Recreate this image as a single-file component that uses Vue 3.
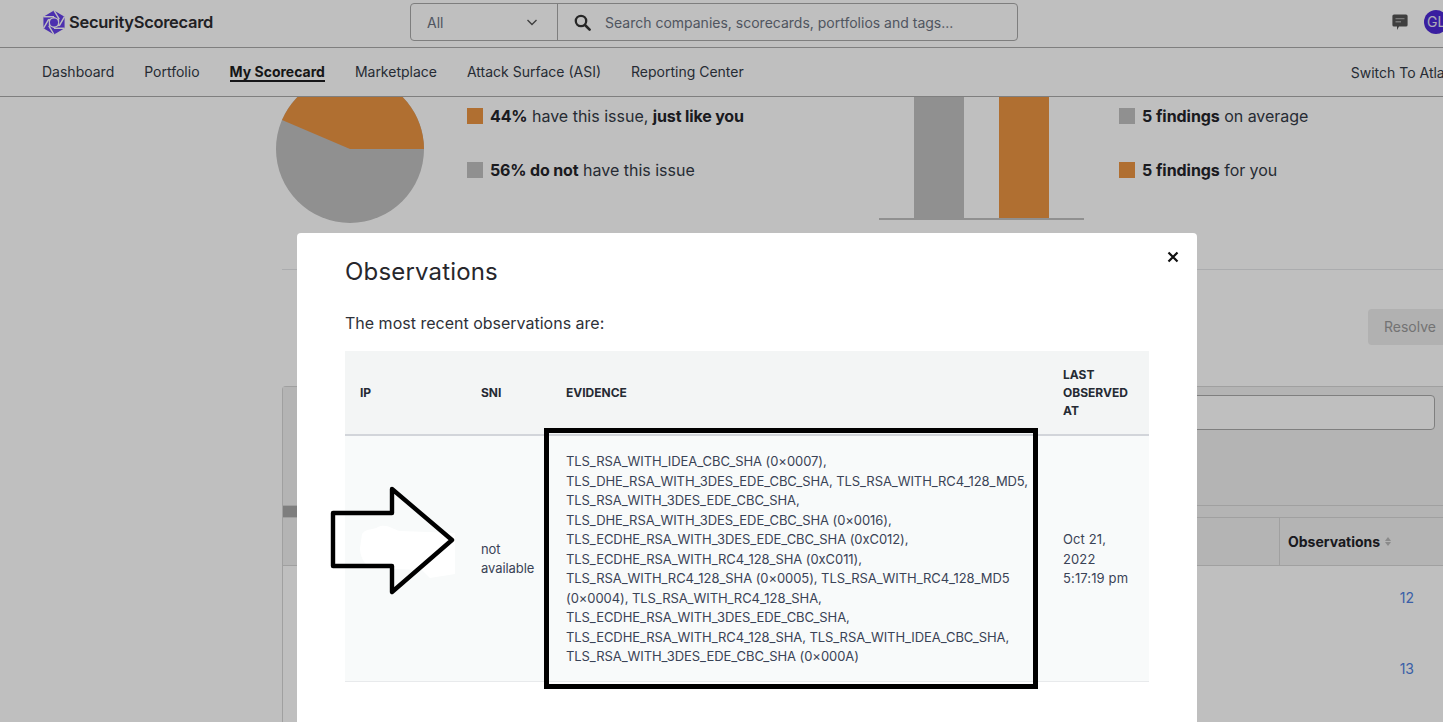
<script setup>
const navItems = [
  { label: 'Dashboard', active: false },
  { label: 'Portfolio', active: false },
  { label: 'My Scorecard', active: true },
  { label: 'Marketplace', active: false },
  { label: 'Attack Surface (ASI)', active: false },
  { label: 'Reporting Center', active: false }
]
const evidence = 'TLS_RSA_WITH_IDEA_CBC_SHA (0×0007), TLS_DHE_RSA_WITH_3DES_EDE_CBC_SHA, TLS_RSA_WITH_RC4_128_MD5, TLS_RSA_WITH_3DES_EDE_CBC_SHA, TLS_DHE_RSA_WITH_3DES_EDE_CBC_SHA (0×0016), TLS_ECDHE_RSA_WITH_3DES_EDE_CBC_SHA (0xC012), TLS_ECDHE_RSA_WITH_RC4_128_SHA (0xC011), TLS_RSA_WITH_RC4_128_SHA (0×0005), TLS_RSA_WITH_RC4_128_MD5 (0×0004), TLS_RSA_WITH_RC4_128_SHA, TLS_ECDHE_RSA_WITH_3DES_EDE_CBC_SHA, TLS_ECDHE_RSA_WITH_RC4_128_SHA, TLS_RSA_WITH_IDEA_CBC_SHA, TLS_RSA_WITH_3DES_EDE_CBC_SHA (0×000A)'
</script>

<template>
  <div class="page">
    <header class="topbar">
      <div class="logo">
        <svg class="logo-mark" width="24" height="25" viewBox="0 0 24 26">
          <path d="M12 0.5 L23 7 V19 L12 25.5 L1 19 V7 Z" fill="#6640ea" />
          <g stroke="#fff" stroke-width="1.5" fill="none">
            <path d="M12 0.5 L17.4 9.5" />
            <path d="M23 7 L17.4 16.5" />
            <path d="M23 19 L12 19" />
            <path d="M12 25.5 L6.6 16.5" />
            <path d="M1 19 L6.6 9.5" />
            <path d="M1 7 L12 7" />
          </g>
          <path d="M12 7 L17.4 9.5 V16.5 L12 19 L6.6 16.5 V9.5 Z" fill="#fff" />
          <circle cx="12" cy="13" r="4.2" fill="#6640ea" />
        </svg>
        <span class="logo-text">SecurityScorecard</span>
      </div>
      <div class="search">
        <div class="search-scope">
          <span>All</span>
          <svg width="10" height="7" viewBox="0 0 10 7"><path d="M0.5 1 L5 5.5 L9.5 1" fill="none" stroke="#555" stroke-width="1.4" /></svg>
        </div>
        <div class="search-field">
          <svg width="17" height="17" viewBox="0 0 17 17"><circle cx="7" cy="7" r="5.2" fill="none" stroke="#333" stroke-width="2.3" /><path d="M11 11 L15.6 15.6" stroke="#333" stroke-width="2.6" stroke-linecap="round" /></svg>
          <span>Search companies, scorecards, portfolios and tags...</span>
        </div>
      </div>
      <svg class="chat" width="16" height="17" viewBox="0 0 16 17"><path d="M2 0.5 H14 a1.6 1.6 0 0 1 1.6 1.6 V11 a1.6 1.6 0 0 1 -1.6 1.6 H7 L5 16 V12.6 H2 A1.6 1.6 0 0 1 0.4 11 V2.1 A1.6 1.6 0 0 1 2 0.5 Z" fill="#555" /><path d="M3.5 4.6 H12.5 M3.5 7.8 H9" stroke="#a0a0a0" stroke-width="1.4" /></svg>
      <div class="avatar">GL</div>
    </header>

    <nav class="navbar">
      <a v-for="item in navItems" :key="item.label" class="nav-item" :class="{ active: item.active }">{{ item.label }}</a>
      <span class="switch">Switch To Atlas</span>
    </nav>

    <section class="stats">
      <svg class="pie" width="148" height="126" viewBox="0 -52 148 126">
        <circle cx="74" cy="0" r="74" fill="#c0c0c0" />
        <path d="M74 0 L148 0 A74 74 0 0 0 6 -29 Z" fill="#eb9442" />
      </svg>
      <div class="legend first">
        <div class="legend-row"><i class="sw orange"></i><span><b>44%</b> have this issue, <b>just like you</b></span></div>
        <div class="legend-row"><i class="sw grey"></i><span><b>56% do not</b> have this issue</span></div>
      </div>
      <div class="bars">
        <i class="bar grey"></i>
        <i class="bar orange"></i>
      </div>
      <div class="legend">
        <div class="legend-row"><i class="sw grey"></i><span><b>5 findings</b> on average</span></div>
        <div class="legend-row"><i class="sw orange"></i><span><b>5 findings</b> for you</span></div>
      </div>
    </section>

    <div class="rule"></div>
    <div class="actions"><button class="resolve">Resolve</button></div>

    <section class="panel">
      <div class="toolbar"><div class="filter"></div></div>
      <div class="strip"><i class="thumb"></i></div>
      <div class="thead"><div class="th-obs">Observations <span class="sort"><i></i><i></i></span></div></div>
      <div class="row">12</div>
      <div class="row">13</div>
    </section>

    <div class="backdrop"></div>

    <div class="modal">
      <svg class="close" width="12" height="12" viewBox="0 0 12 12"><path d="M1.5 1.5 L10.5 10.5 M10.5 1.5 L1.5 10.5" stroke="#111" stroke-width="2.2" /></svg>
      <h2>Observations</h2>
      <p class="lead">The most recent observations are:</p>
      <table>
        <thead>
          <tr>
            <th class="c-ip">IP</th>
            <th class="c-sni">SNI</th>
            <th class="c-ev">EVIDENCE</th>
            <th class="c-last">LAST OBSERVED AT</th>
          </tr>
        </thead>
        <tbody>
          <tr>
            <td></td>
            <td>not available</td>
            <td>{{ evidence }}</td>
            <td class="when">Oct 21, 2022 5:17:19 pm</td>
          </tr>
        </tbody>
      </table>
      <svg class="marks" width="130" height="116" viewBox="0 0 130 116">
        <path d="M32 48 C36 42 44 44 48 41 C56 37 62 43 70 45 L125 47 V88 L100 92 L92 84 L40 82 C34 78 30 70 30 62 Z" fill="#fff" />
        <path d="M3 27 H62 V3 L122 54 L62 106 V80 H3 Z" fill="none" stroke="#000" stroke-width="4.4" stroke-linejoin="round" />
      </svg>
      <div class="box"></div>
    </div>
  </div>
</template>

<style>
html, body { margin: 0; overflow: hidden; background: #fff; }
</style>

<style scoped>
.page {
  position: relative;
  width: 1443px;
  height: 722px;
  overflow: hidden;
  background: #fff;
  font-family: Inter, "Liberation Sans", sans-serif;
  color: #333a46;
  font-size: 14px;
}
.topbar {
  height: 44px;
  padding-bottom: 3px;
  border-bottom: 1px solid #aaa;
  display: flex;
  align-items: center;
  padding-left: 42px;
  box-sizing: content-box;
  white-space: nowrap;
}
.logo { display: flex; align-items: center; width: 368px; flex: none; }
.logo-mark { flex: none; }
.logo-text {
  margin-left: 3px;
  font-size: 16.5px;
  font-weight: 600;
  letter-spacing: -0.3px;
  color: #2c2c30;
}
.search {
  flex: none;
  display: flex;
  width: 608px;
  height: 38px;
  box-sizing: border-box;
  border: 1px solid #a8a8a8;
  border-radius: 4px;
  color: #6b7280;
}
.search-scope {
  width: 147px;
  box-sizing: border-box;
  padding: 0 20px 0 16px;
  display: flex;
  align-items: center;
  justify-content: space-between;
  border-right: 1px solid #a8a8a8;
}
.search-field {
  flex: 1;
  display: flex;
  align-items: center;
  gap: 14px;
  padding-left: 16px;
}
.chat { margin-left: 374px; flex: none; }
.avatar {
  flex: none;
  margin-left: 16px;
  width: 24px;
  height: 24px;
  border-radius: 50%;
  background: #4d29d6;
  color: #e6e6f5;
  font-size: 14px;
  line-height: 24px;
  padding-left: 3px;
  box-sizing: border-box;
}
.navbar {
  height: 48px;
  border-bottom: 1px solid #aaa;
  display: flex;
  align-items: center;
  gap: 30px;
  padding-left: 42px;
  white-space: nowrap;
  position: relative;
}
.nav-item { line-height: 17px; border-bottom: 2px solid transparent; }
.nav-item.active { font-weight: 700; color: #1d1d20; border-bottom-color: #1d1d20; }
.switch { margin-left: 577px; }
.stats { display: flex; height: 126px; padding-left: 276px; overflow: hidden; }
.pie { flex: none; }
.legend { display: flex; flex-direction: column; gap: 38px; padding-top: 11px; font-size: 16px; width: 340px; letter-spacing: -0.05px; }
.legend.first { margin-left: 43px; width: 412px; flex: none; letter-spacing: 0; }
.legend.first b { letter-spacing: -0.15px; }
.legend-row { display: flex; align-items: center; height: 16px; gap: 7px; white-space: nowrap; }
.legend b { font-weight: 700; color: #24242a; }
.sw { width: 16px; height: 16px; flex: none; }
.orange { background: #eb9442; }
.grey { background: #c0c0c0; }
.bars {
  flex: none;
  box-sizing: border-box;
  width: 205px;
  height: 123px;
  margin-right: 35px;
  padding-left: 35px;
  display: flex;
  gap: 35px;
  border-bottom: 2px solid #c0c0c0;
}
.bar { width: 50px; }
.rule { height: 1px; background: #e4e6e8; margin: 46px 0 0 282px; }
.actions { display: flex; justify-content: flex-end; margin: 39px -30px 0 0; }
.resolve {
  width: 105px;
  height: 36px;
  border: 0;
  border-radius: 4px;
  background: #ececec;
  color: #9a9a9a;
  font: 14px Inter, sans-serif;
  text-align: left;
  padding: 0 0 2px 16px;
}
.panel {
  height: 340px;
  margin: 41px 0 0 282px;
  border-left: 1px solid #d6d6d6;
  border-top: 1px solid #d6d6d6;
  border-top-left-radius: 4px;
}
.toolbar { height: 118px; background: #f0f0f0; box-sizing: border-box; padding: 8px 8px 0 100px; }
.filter { height: 35px; box-sizing: border-box; background: #fff; border: 1px solid #aaa; border-radius: 4px; }
.strip { height: 11px; background: #f0f0f0; border-top: 1px solid #d6d6d6; border-bottom: 1px solid #d6d6d6; }
.thumb { display: block; width: 14px; height: 11px; background: #a8a8a8; }
.thead { height: 47px; background: #f0f0f0; border-bottom: 1px solid #d6d6d6; display: flex; justify-content: flex-end; }
.th-obs {
  width: 164px;
  box-sizing: border-box;
  border-left: 1px solid #d6d6d6;
  padding-left: 8px;
  display: flex;
  align-items: center;
  gap: 5px;
  font-weight: 700;
  color: #23232a;
}
.sort { display: flex; flex-direction: column; gap: 1px; }
.sort i { width: 0; height: 0; border-left: 3.5px solid transparent; border-right: 3.5px solid transparent; }
.sort i:first-child { border-bottom: 4px solid #b8b8b8; }
.sort i:last-child { border-top: 4px solid #b8b8b8; }
.row { height: 72px; box-sizing: border-box; padding: 23px 29px 0 0; text-align: right; color: #4f7fe0; line-height: 17px; }
.row + .row { padding-top: 22px; }
.backdrop { position: absolute; inset: 0; background: rgba(0, 0, 0, 0.25); }
.modal {
  position: absolute;
  left: 297px;
  top: 233px;
  width: 900px;
  height: 600px;
  box-sizing: border-box;
  background: #fff;
  border-radius: 4px;
  padding: 0 48px;
}
.close { position: absolute; left: 870px; top: 18px; }
h2 { margin: 0; padding-top: 24px; font-size: 24px; line-height: 30px; font-weight: 400; letter-spacing: 0.17px; color: #27272c; }
.lead { margin: 26px 0 0; font-size: 16px; line-height: 20px; color: #2e3138; }
table { margin-top: 18px; width: 804px; border-collapse: collapse; table-layout: fixed; }
th {
  height: 84px;
  padding: 0 15px;
  background: #f3f5f5;
  border-bottom: 2px solid #d2d5da;
  box-sizing: border-box;
  text-align: left;
  font-size: 12px;
  line-height: 18px;
  font-weight: 700;
  color: #252a33;
}
.c-ip { width: 121px; }
.c-sni { width: 85px; }
.c-ev { width: 497px; }
.c-last { width: 101px; }
td {
  padding: 16px 15px 14px;
  background: #f8fafa;
  border-bottom: 1px solid #e8eaec;
  font-size: 13px;
  line-height: 19.5px;
  letter-spacing: -0.07px;
  color: #3a4356;
}
td.when { letter-spacing: 0.12px; }
.marks { position: absolute; left: 33px; top: 253px; }
.box {
  position: absolute;
  left: 247px;
  top: 195px;
  width: 494px;
  height: 261px;
  box-sizing: border-box;
  border: 5px solid #000;
}
</style>
